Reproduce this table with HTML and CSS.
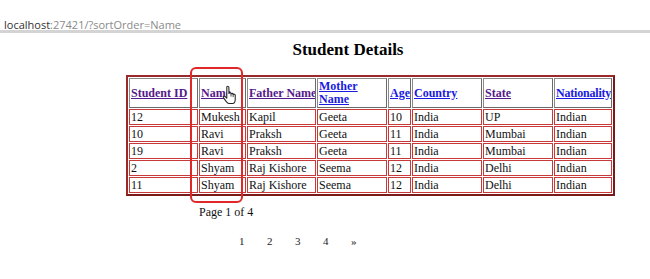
FILE: index.html
```html
<!DOCTYPE html>
<html>
<head>
<meta charset="utf-8">
<link rel="stylesheet" href="styles.css">
</head>
<body>
<div class="addr"><span class="host">localhost</span>:27421/?sortOrder=Name</div>
<div class="page">
  <h2 class="title">Student Details</h2>
  <div class="wrap">
    <table class="grid">
      <colgroup>
        <col class="c1"><col class="c2"><col class="c3"><col class="c4"><col class="c5"><col class="c6"><col class="c7"><col class="c8">
      </colgroup>
      <tr class="head">
        <th><a class="v" href="#">Student ID</a></th>
        <th><a class="v" href="#">Name</a></th>
        <th><a class="v" href="#">Father Name</a></th>
        <th><a class="n" href="#">Mother Name</a></th>
        <th><a class="n" href="#">Age</a></th>
        <th><a class="n" href="#">Country</a></th>
        <th><a class="v" href="#">State</a></th>
        <th><a class="n" href="#">Nationality</a></th>
      </tr>
      <tr><td>12</td><td>Mukesh</td><td>Kapil</td><td>Geeta</td><td>10</td><td>India</td><td>UP</td><td>Indian</td></tr>
      <tr><td>10</td><td>Ravi</td><td>Praksh</td><td>Geeta</td><td>11</td><td>India</td><td>Mumbai</td><td>Indian</td></tr>
      <tr><td>19</td><td>Ravi</td><td>Praksh</td><td>Geeta</td><td>11</td><td>India</td><td>Mumbai</td><td>Indian</td></tr>
      <tr><td>2</td><td>Shyam</td><td>Raj Kishore</td><td>Seema</td><td>12</td><td>India</td><td>Delhi</td><td>Indian</td></tr>
      <tr><td>11</td><td>Shyam</td><td>Raj Kishore</td><td>Seema</td><td>12</td><td>India</td><td>Delhi</td><td>Indian</td></tr>
    </table>
    <div class="hl"></div>
    <svg class="cursor" width="17" height="20" viewBox="0 0 16 19">
      <path d="M4.5 1.5 C5.5 0.8 6.5 1.3 6.5 2.5 L6.5 8 C7 7 8.5 7.2 8.5 8.4 C9 7.6 10.5 7.8 10.5 9 C11 8.4 12.5 8.6 12.5 9.8 L12.5 13.5 C12.5 15.5 11.5 17.5 10 17.5 L6.5 17.5 C5.5 17.5 4.8 16.8 4 15.8 L1.3 12 C0.8 11.2 1.6 10.2 2.6 10.8 L4.5 12.5 Z" fill="#fff" stroke="#222" stroke-width="1" stroke-linejoin="round"/>
      <path d="M8.5 8.4 L8.5 11 M10.5 9 L10.5 11.5" stroke="#222" stroke-width="0.8" fill="none"/>
    </svg>
  </div>
  <div class="pageinfo">Page 1 of 4</div>
  <div class="pager">
    <span>1</span><span>2</span><span>3</span><span>4</span><span>»</span>
  </div>
</div>
</body>
</html>
```

FILE: styles.css
```css
html, body {
  margin: 0;
  padding: 0;
  background: #fff;
}
body {
  width: 650px;
  height: 279px;
  overflow: hidden;
  font-family: "Liberation Serif", "Times New Roman", serif;
}
.addr {
  height: 33px;
  box-sizing: border-box;
  padding: 18px 0 0 4px;
  font-family: "Open Sans", "DejaVu Sans", sans-serif;
  font-size: 11px;
  line-height: 13px;
  color: #8a8a8a;
  border-bottom: 3px solid #d4d4d4;
}
.addr .host {
  color: #333;
}
.page {
  padding-top: 7px;
}
.title {
  margin: 0;
  font-size: 17px;
  line-height: 20px;
  font-weight: bold;
  text-align: center;
  padding-left: 46px;
  color: #000;
}
.wrap {
  position: relative;
  margin-top: 15px;
  margin-left: 126px;
  width: 489px;
}
.grid {
  border-collapse: separate;
  border-spacing: 1px;
  border: 2px solid #9a2a2a;
  border-right-color: #7a1a1a;
  border-bottom-color: #7a1a1a;
  table-layout: fixed;
  width: 489px;
  font-size: 12px;
  line-height: 13px;
  color: #111;
}
.c1 { width: 69px; }
.c2 { width: 47px; }
.c3 { width: 69px; }
.c4 { width: 70px; }
.c5 { width: 23px; }
.c6 { width: 70px; }
.c7 { width: 70px; }
.c8 { width: 58px; }
.grid th, .grid td {
  padding: 0 1px;
  text-align: left;
  white-space: nowrap;
  overflow: hidden;
}
.grid th {
  height: 28px;
  border: 1px solid #8a8a8a;
  border-right-color: #6a6a6a;
  border-bottom-color: #6a6a6a;
  font-weight: bold;
}
.grid th:nth-child(4) {
  white-space: normal;
}
.grid th:nth-child(8) {
  letter-spacing: -0.2px;
}
.grid td {
  height: 14px;
  border: 1px solid #c83a3a;
}
.grid a {
  text-decoration: underline;
}
.grid a.v { color: #551a8b; }
.grid a.n { color: #1a1ae0; }
.hl {
  position: absolute;
  left: 64px;
  top: -8px;
  width: 53px;
  height: 136px;
  border: 2px solid #e02828;
  border-radius: 6px;
  box-sizing: border-box;
}
.cursor {
  position: absolute;
  left: 96px;
  top: 10px;
}
.pageinfo {
  margin-top: 9px;
  margin-left: 199px;
  font-size: 12px;
  line-height: 14px;
  color: #111;
}
.pager {
  margin-top: 15px;
  margin-left: 239px;
  display: flex;
  font-size: 11px;
  line-height: 14px;
  color: #222;
}
.pager span {
  width: 28px;
}
```
